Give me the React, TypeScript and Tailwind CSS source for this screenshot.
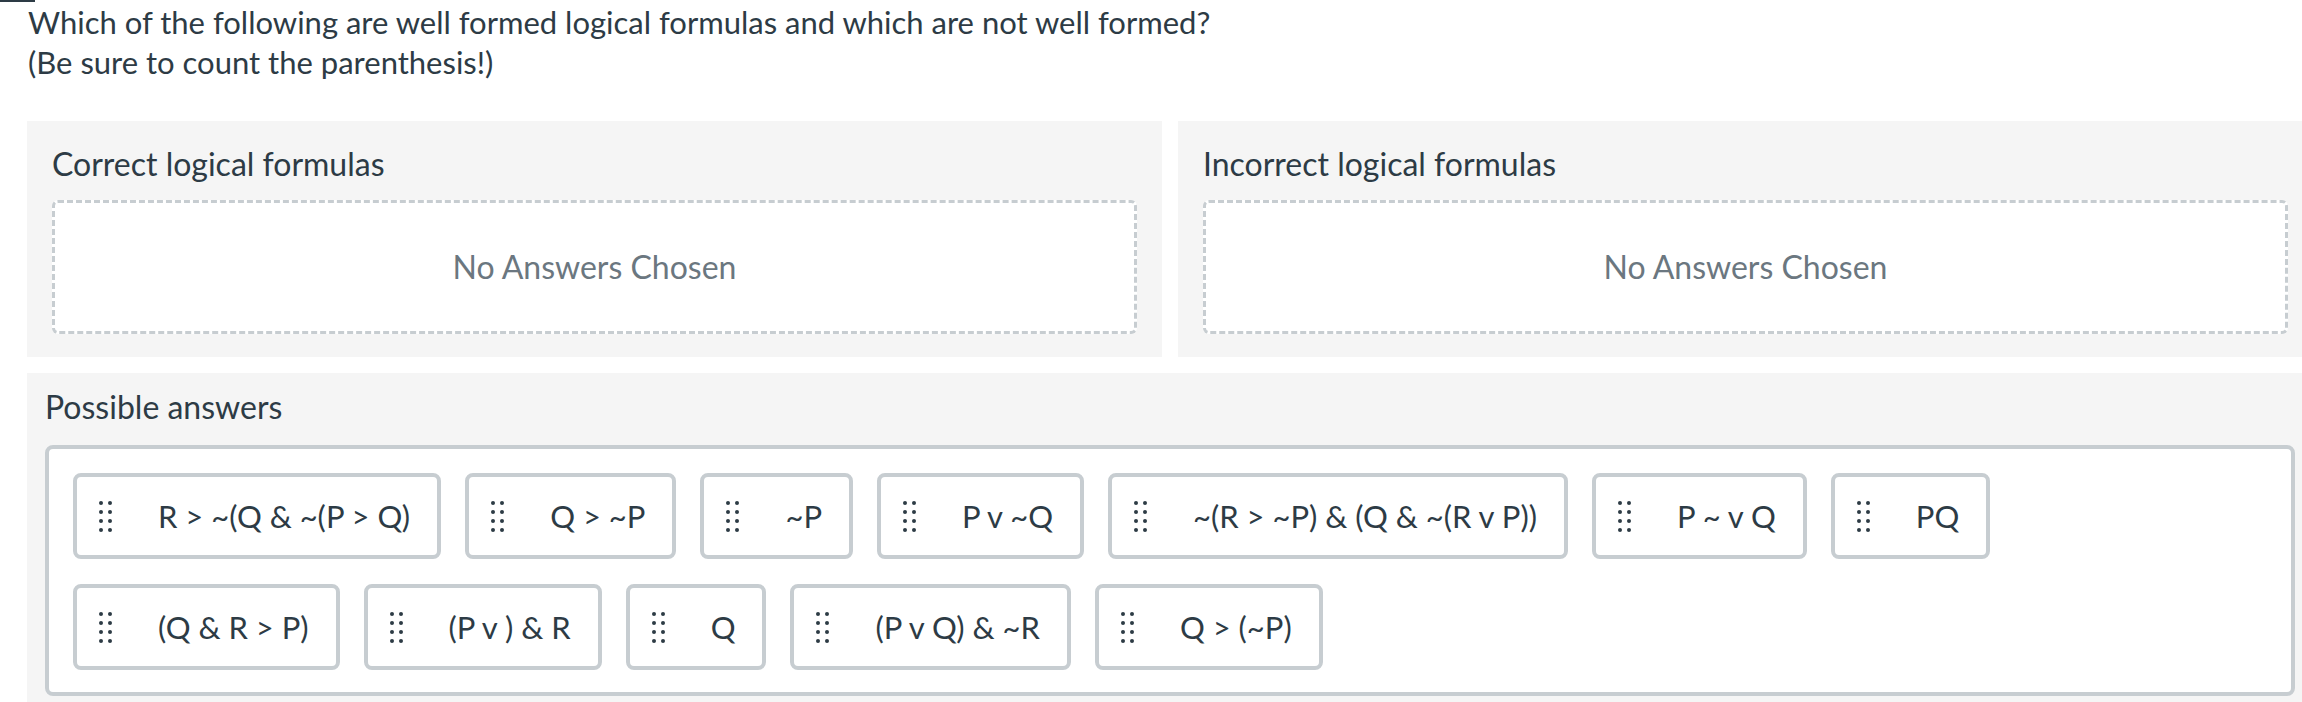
import React from 'react';

const correctAnswers: string[] = [];
const incorrectAnswers: string[] = [];

const possibleRows: string[][] = [
  ['R > ~(Q & ~(P > Q)', 'Q > ~P', '~P', 'P v ~Q', '~(R > ~P) & (Q & ~(R v P))', 'P ~ v Q', 'PQ'],
  ['(Q & R > P)', '(P v ) & R', 'Q', '(P v Q) & ~R', 'Q > (~P)'],
];

const DragHandle = () => (
  <svg width="13" height="31" viewBox="0 0 13 31" className="shrink-0" aria-hidden="true">
    {[2, 11, 20, 29].map((cy) => (
      <g key={cy} fill="#2d3b45">
        <circle cx="2" cy={cy} r="2" />
        <circle cx="11" cy={cy} r="2" />
      </g>
    ))}
  </svg>
);

const AnswerChip = ({ label }: { label: string }) => (
  <div className="flex items-center h-[86px] border-4 border-[#c7cdd1] rounded-[8px] bg-white pl-[22px] pr-[27px] cursor-move">
    <DragHandle />
    <span className="ml-[46px] whitespace-pre leading-[40px]">{label}</span>
  </div>
);

const DropZone = ({ title, items }: { title: string; items: string[] }) => (
  <div className="flex-1 bg-[#f5f5f5] px-[25px] pt-[23px] pb-[23px]">
    <h3 className="leading-[40px] text-[32px]">{title}</h3>
    <div className="mt-[16px] h-[134px] border-[3px] border-dashed border-[#c7cdd1] rounded-[6px] bg-white flex items-center justify-center">
      {items.length === 0 ? (
        <span className="text-[#6b7780] text-[32px]">No Answers Chosen</span>
      ) : (
        items.map((i) => <AnswerChip key={i} label={i} />)
      )}
    </div>
  </div>
);

export default function App() {
  return (
    <div
      className="w-[2302px] h-[702px] overflow-hidden bg-white text-[#2d3b45] text-[31px] leading-[40px]"
      style={{ fontFamily: 'Lato, "Noto Sans", sans-serif' }}
    >
      <div className="w-[35px] h-[2px] bg-[#2d3b45]" />
      <div className="ml-[27px] w-[2286px]">
        {/* Question */}
        <div className="pl-[1px]">
          <p>Which of the following are well formed logical formulas and which are not well formed?</p>
          <p>(Be sure to count the parenthesis!)</p>
        </div>

        {/* Drop targets */}
        <div className="flex gap-[16px] mt-[39px]">
          <DropZone title="Correct logical formulas" items={correctAnswers} />
          <DropZone title="Incorrect logical formulas" items={incorrectAnswers} />
        </div>

        {/* Answer pool */}
        <div className="mt-[16px] bg-[#f5f5f5] px-[18px] pt-[14px] pb-[18px]">
          <h3 className="leading-[40px] text-[32px]">Possible answers</h3>
          <div className="mt-[18px] border-4 border-[#c7cdd1] rounded-[8px] bg-white p-[24px] pb-[22px] flex flex-col gap-[25px]">
            {possibleRows.map((row, idx) => (
              <div key={idx} className="flex gap-[24px]">
                {row.map((label) => (
                  <AnswerChip key={label} label={label} />
                ))}
              </div>
            ))}
          </div>
        </div>
      </div>
    </div>
  );
}
